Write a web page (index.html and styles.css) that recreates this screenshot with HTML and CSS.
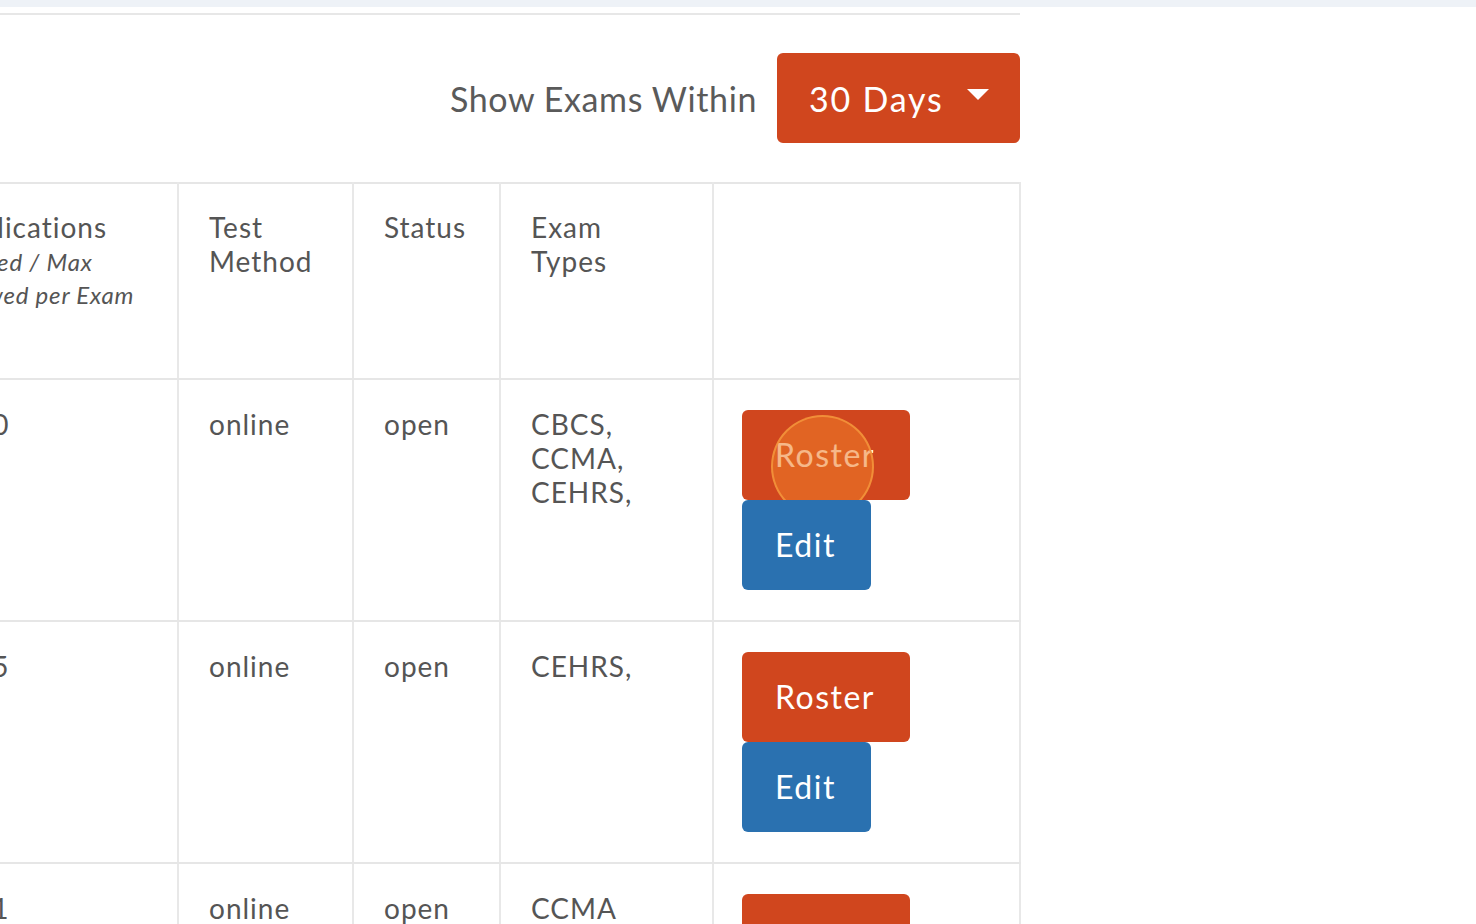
FILE: index.html
```html
<!DOCTYPE html>
<html lang="en">
<head>
<meta charset="utf-8">
<title>Exams</title>
<link rel="stylesheet" href="styles.css">
</head>
<body>
<div class="topbar"></div>
<div class="panel">
  <div class="filter">
    <span class="filter-label">Show Exams Within</span>
    <button class="btn btn-orange btn-dropdown">30 Days <span class="caret"></span></button>
  </div>
  <table class="exams">
    <colgroup>
      <col class="c-apps">
      <col class="c-method">
      <col class="c-status">
      <col class="c-types">
      <col class="c-actions">
    </colgroup>
    <thead>
      <tr>
        <th>Applications<br><em class="sub">Booked / Max<br>Allowed per Exam<br>(avg)</em></th>
        <th>Test<br>Method</th>
        <th>Status</th>
        <th>Exam<br>Types</th>
        <th></th>
      </tr>
    </thead>
    <tbody>
      <tr>
        <td>0/20</td>
        <td>online</td>
        <td>open</td>
        <td>CBCS,<br>CCMA,<br>CEHRS,</td>
        <td>
          <div class="actions">
            <button class="btn btn-orange">Roster<span class="click-ring"></span></button>
            <button class="btn btn-blue">Edit</button>
          </div>
        </td>
      </tr>
      <tr>
        <td>2/15</td>
        <td>online</td>
        <td>open</td>
        <td>CEHRS,</td>
        <td>
          <div class="actions">
            <button class="btn btn-orange">Roster</button>
            <button class="btn btn-blue">Edit</button>
          </div>
        </td>
      </tr>
      <tr>
        <td>1/11</td>
        <td>online</td>
        <td>open</td>
        <td>CCMA</td>
        <td>
          <div class="actions">
            <button class="btn btn-orange">Roster</button>
            <button class="btn btn-blue">Edit</button>
          </div>
        </td>
      </tr>
    </tbody>
  </table>
</div>
</body>
</html>
```

FILE: styles.css
```css
html, body {
  margin: 0;
  padding: 0;
  background: #ffffff;
  overflow: hidden;
}

body {
  font-family: Lato, "Liberation Sans", sans-serif;
  color: #555555;
}

.topbar {
  height: 7px;
  background: #eef2f7;
}

.panel {
  width: 1020px;
  margin-top: 6px;
  border-top: 2px solid #e7e7e7;
}

.filter {
  display: flex;
  justify-content: flex-end;
  align-items: center;
  gap: 20px;
  padding-top: 38px;
  padding-bottom: 39px;
}

.filter-label {
  font-size: 34px;
  color: #5a5a5a;
  letter-spacing: 0.6px;
}

.btn {
  font-family: Lato, "Liberation Sans", sans-serif;
  border: none;
  color: #ffffff;
  border-radius: 6px;
  cursor: pointer;
}

.btn-orange {
  background: #d0461e;
}

.btn-blue {
  background: #2a71b0;
}

.btn-dropdown {
  display: flex;
  align-items: center;
  justify-content: space-between;
  width: 243px;
  height: 90px;
  padding: 0 31px 0 32px;
  font-size: 34px;
  letter-spacing: 1.8px;
}

.caret {
  width: 0;
  height: 0;
  border-left: 11px solid transparent;
  border-right: 11px solid transparent;
  border-top: 11px solid #ffffff;
  margin-top: -8px;
}

.exams {
  table-layout: fixed;
  border-collapse: collapse;
  width: 1107px;
  margin-left: -88px;
  font-size: 28px;
  letter-spacing: 1px;
}

.c-apps { width: 265px; }
.c-method { width: 175px; }
.c-status { width: 147px; }
.c-types { width: 213px; }
.c-actions { width: 307px; }

.exams th,
.exams td {
  text-align: left;
  vertical-align: top;
  font-weight: normal;
  line-height: 34px;
  padding: 26px 30px 34px 30px;
  border-left: 2px solid #e8e8e8;
  border-right: 2px solid #e8e8e8;
  border-top: 2px solid #e6e6e6;
  border-bottom: 2px solid #e6e6e6;
}

.exams td {
  padding-top: 27px;
  padding-bottom: 30px;
}

.sub {
  font-size: 24px;
  line-height: 33px;
  letter-spacing: 0.8px;
  display: inline-block;
  margin-top: 1px;
}

.actions {
  display: flex;
  flex-direction: column;
  align-items: flex-start;
  padding-top: 3px;
  margin-left: -2px;
}

.actions .btn {
  position: relative;
  font-size: 32px;
  line-height: 40px;
  letter-spacing: 1.5px;
  padding: 25px 35px 25px 33px;
}

.click-ring {
  position: absolute;
  left: 29px;
  top: 5px;
  width: 99px;
  height: 99px;
  border-radius: 50%;
  background: rgba(238, 125, 40, 0.55);
  border: 2px solid rgba(245, 150, 60, 0.85);
}
```
